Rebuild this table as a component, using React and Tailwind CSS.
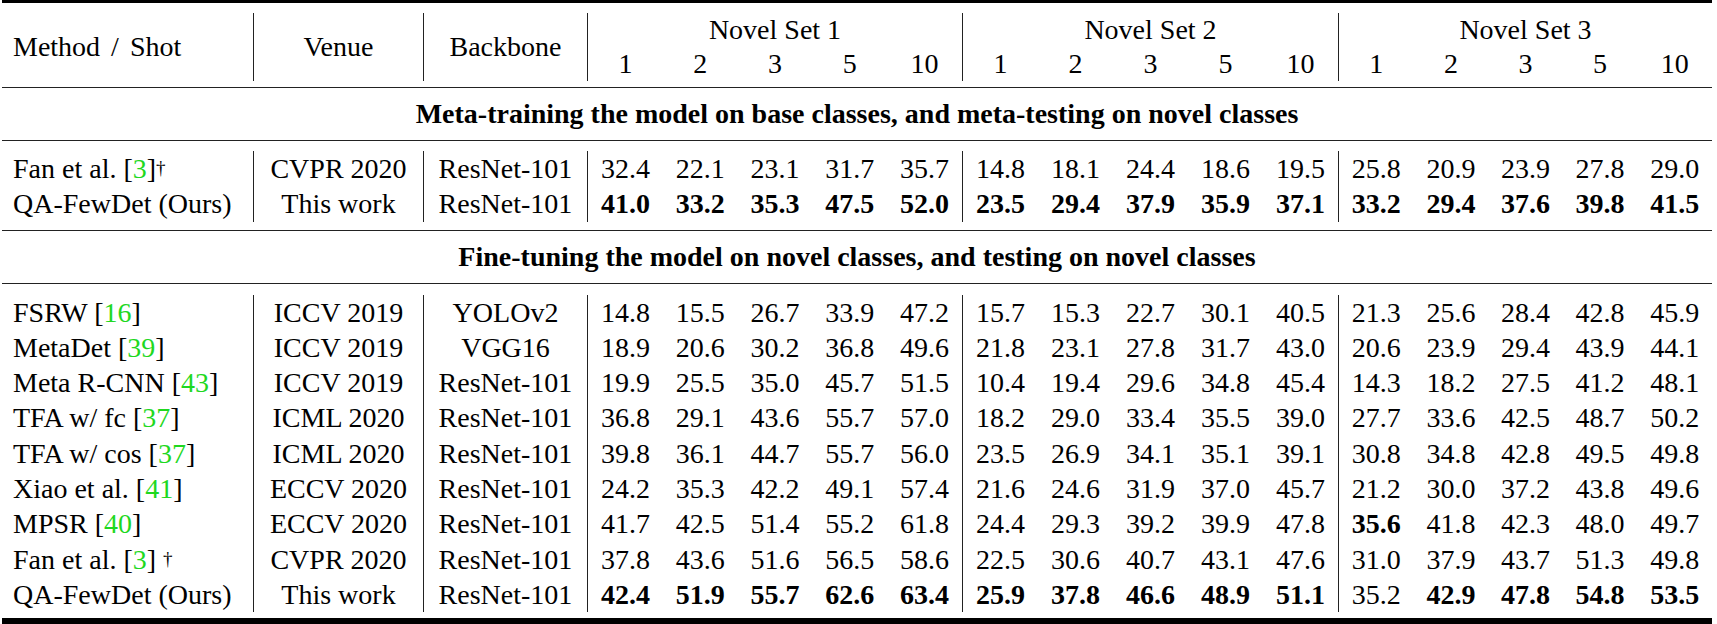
import React from 'react';

const sets = ['Novel Set 1', 'Novel Set 2', 'Novel Set 3'];
const setWidths = ['w-[375px]', 'w-[376px]', 'w-[374px]'];
const shots = ['1', '2', '3', '5', '10'];

const Ref = ({ n }) => <span className="text-[#1fd81f]">{n}</span>;
const Dagger = () => <sup className="text-[19px] relative -top-[4px]">†</sup>;

const metaRows = [
  {
    method: <>Fan et al. [<Ref n="3" />]<Dagger /></>,
    venue: 'CVPR 2020',
    backbone: 'ResNet-101',
    vals: [
      ['32.4', '22.1', '23.1', '31.7', '35.7'],
      ['14.8', '18.1', '24.4', '18.6', '19.5'],
      ['25.8', '20.9', '23.9', '27.8', '29.0'],
    ],
  },
  {
    method: 'QA-FewDet (Ours)',
    venue: 'This work',
    backbone: 'ResNet-101',
    vals: [
      ['41.0', '33.2', '35.3', '47.5', '52.0'],
      ['23.5', '29.4', '37.9', '35.9', '37.1'],
      ['33.2', '29.4', '37.6', '39.8', '41.5'],
    ],
    bold: () => true,
  },
];

const fineRows = [
  {
    method: <>FSRW [<Ref n="16" />]</>,
    venue: 'ICCV 2019',
    backbone: 'YOLOv2',
    vals: [
      ['14.8', '15.5', '26.7', '33.9', '47.2'],
      ['15.7', '15.3', '22.7', '30.1', '40.5'],
      ['21.3', '25.6', '28.4', '42.8', '45.9'],
    ],
  },
  {
    method: <>MetaDet [<Ref n="39" />]</>,
    venue: 'ICCV 2019',
    backbone: 'VGG16',
    vals: [
      ['18.9', '20.6', '30.2', '36.8', '49.6'],
      ['21.8', '23.1', '27.8', '31.7', '43.0'],
      ['20.6', '23.9', '29.4', '43.9', '44.1'],
    ],
  },
  {
    method: <>Meta R-CNN [<Ref n="43" />]</>,
    venue: 'ICCV 2019',
    backbone: 'ResNet-101',
    vals: [
      ['19.9', '25.5', '35.0', '45.7', '51.5'],
      ['10.4', '19.4', '29.6', '34.8', '45.4'],
      ['14.3', '18.2', '27.5', '41.2', '48.1'],
    ],
  },
  {
    method: <>TFA w/ fc [<Ref n="37" />]</>,
    venue: 'ICML 2020',
    backbone: 'ResNet-101',
    vals: [
      ['36.8', '29.1', '43.6', '55.7', '57.0'],
      ['18.2', '29.0', '33.4', '35.5', '39.0'],
      ['27.7', '33.6', '42.5', '48.7', '50.2'],
    ],
  },
  {
    method: <>TFA w/ cos [<Ref n="37" />]</>,
    venue: 'ICML 2020',
    backbone: 'ResNet-101',
    vals: [
      ['39.8', '36.1', '44.7', '55.7', '56.0'],
      ['23.5', '26.9', '34.1', '35.1', '39.1'],
      ['30.8', '34.8', '42.8', '49.5', '49.8'],
    ],
  },
  {
    method: <>Xiao et al. [<Ref n="41" />]</>,
    venue: 'ECCV 2020',
    backbone: 'ResNet-101',
    vals: [
      ['24.2', '35.3', '42.2', '49.1', '57.4'],
      ['21.6', '24.6', '31.9', '37.0', '45.7'],
      ['21.2', '30.0', '37.2', '43.8', '49.6'],
    ],
  },
  {
    method: <>MPSR [<Ref n="40" />]</>,
    venue: 'ECCV 2020',
    backbone: 'ResNet-101',
    vals: [
      ['41.7', '42.5', '51.4', '55.2', '61.8'],
      ['24.4', '29.3', '39.2', '39.9', '47.8'],
      ['35.6', '41.8', '42.3', '48.0', '49.7'],
    ],
    bold: (s, i) => s === 2 && i === 0,
  },
  {
    method: <>Fan et al. [<Ref n="3" />] <Dagger /></>,
    venue: 'CVPR 2020',
    backbone: 'ResNet-101',
    vals: [
      ['37.8', '43.6', '51.6', '56.5', '58.6'],
      ['22.5', '30.6', '40.7', '43.1', '47.6'],
      ['31.0', '37.9', '43.7', '51.3', '49.8'],
    ],
  },
  {
    method: 'QA-FewDet (Ours)',
    venue: 'This work',
    backbone: 'ResNet-101',
    vals: [
      ['42.4', '51.9', '55.7', '62.6', '63.4'],
      ['25.9', '37.8', '46.6', '48.9', '51.1'],
      ['35.2', '42.9', '47.8', '54.8', '53.5'],
    ],
    bold: (s, i) => !(s === 2 && i === 0),
  },
];

const DataRow = ({ row }) => (
  <div className="flex h-[35.3px] leading-[35.3px]">
    <div className="w-[251px] pl-[11px] whitespace-nowrap">{row.method}</div>
    <div className="w-[170px] border-l border-[#222] text-center whitespace-nowrap">{row.venue}</div>
    <div className="w-[164px] border-l border-[#222] text-center whitespace-nowrap">{row.backbone}</div>
    {row.vals.map((vs, s) => (
      <div key={s} className={`${setWidths[s]} border-l border-[#222] grid grid-cols-5 text-center`}>
        {vs.map((v, i) => (
          <span key={i} className={row.bold && row.bold(s, i) ? 'font-bold' : ''}>
            {v}
          </span>
        ))}
      </div>
    ))}
  </div>
);

const SectionTitle = ({ children }) => (
  <div className="h-[53px] flex items-center justify-center font-bold border-b border-[#222]">
    {children}
  </div>
);

export default function App() {
  return (
    <div className="w-[1717px] h-[624px] bg-white text-black text-[28px] font-['Liberation_Serif',serif] overflow-hidden">
      <div className="ml-[2px] w-[1710px]">
        <div className="h-[3px] bg-black" />

        {/* header */}
        <div className="pt-[10px] pb-[6px] border-b border-[#222] flex">
          <div className="w-[251px] pl-[11px] flex items-center leading-[34px] [word-spacing:4px]">Method / Shot</div>
          <div className="w-[170px] border-l border-[#222] flex items-center justify-center">Venue</div>
          <div className="w-[164px] border-l border-[#222] flex items-center justify-center">Backbone</div>
          {sets.map((name, s) => (
            <div key={name} className={`${setWidths[s]} border-l border-[#222] leading-[34px]`}>
              <div className="text-center">{name}</div>
              <div className="grid grid-cols-5 text-center">
                {shots.map((n) => (
                  <span key={n}>{n}</span>
                ))}
              </div>
            </div>
          ))}
        </div>

        <SectionTitle>Meta-training the model on base classes, and meta-testing on novel classes</SectionTitle>
        <div className="pt-[10px] pb-[8px] border-b border-[#222]">
          {metaRows.map((r, i) => (
            <DataRow key={i} row={r} />
          ))}
        </div>

        <SectionTitle>Fine-tuning the model on novel classes, and testing on novel classes</SectionTitle>
        <div className="pt-[11px] pb-[6px]">
          {fineRows.map((r, i) => (
            <DataRow key={i} row={r} />
          ))}
        </div>
        <div className="h-[6px] bg-black" />
      </div>
    </div>
  );
}
